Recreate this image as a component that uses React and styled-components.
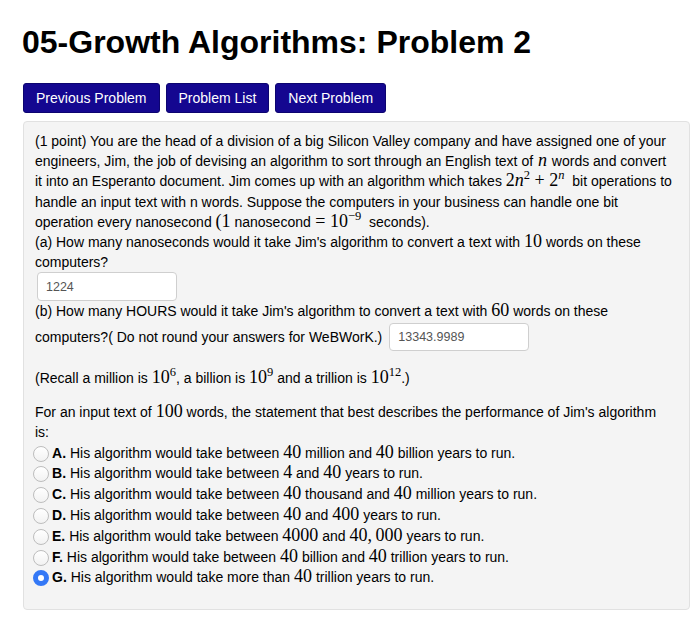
import React from 'react'
import styled, { createGlobalStyle } from 'styled-components'

const GlobalStyle = createGlobalStyle`
  body {
    margin: 0;
    background: #fff;
    font-family: "Liberation Sans", Arial, sans-serif;
    color: #000;
  }
`

const options = [
  { key: 'A', text: <>His algorithm would take between <M>40</M> million and <M>40</M> billion years to run.</> },
  { key: 'B', text: <>His algorithm would take between <M>4</M> and <M>40</M> years to run.</> },
  { key: 'C', text: <>His algorithm would take between <M>40</M> thousand and <M>40</M> million years to run.</> },
  { key: 'D', text: <>His algorithm would take between <M>40</M> and <M>400</M> years to run.</> },
  { key: 'E', text: <>His algorithm would take between <M>4000</M> and <M>40,&thinsp;000</M> years to run.</> },
  { key: 'F', text: <>His algorithm would take between <M>40</M> billion and <M>40</M> trillion years to run.</> },
  { key: 'G', text: <>His algorithm would take more than <M>40</M> trillion years to run.</>, checked: true },
]

function App() {
  return (
    <>
      <GlobalStyle />
      <Page>
        <Title>05-Growth Algorithms: Problem 2</Title>
        <Nav>
          <NavBtn>Previous Problem</NavBtn>
          <NavBtn>Problem List</NavBtn>
          <NavBtn>Next Problem</NavBtn>
        </Nav>
        <Panel>
          <Text>
            (1 point) You are the head of a division of a big Silicon Valley company and have assigned one of your<br />
            engineers, Jim, the job of devising an algorithm to sort through an English text of <M><Var>n</Var></M> words and convert<br />
            it into an Esperanto document. Jim comes up with an algorithm which takes <M>2<i>n</i><sup>2</sup><Op>+</Op>2<sup><i>n</i></sup></M>&nbsp; bit operations to<br />
            handle an input text with n words. Suppose the computers in your business can handle one bit<br />
            operation every nanosecond <M>(1</M> nanosecond<M><Op>=</Op>10<sup>−9</sup></M>&nbsp; seconds).<br />
            (a) How many nanoseconds would it take Jim's algorithm to convert a text with <M>10</M> words on these<br />
            computers?
          </Text>
          <Answer value="1224" readOnly />
          <Text>
            (b) How many HOURS would it take Jim's algorithm to convert a text with <M>60</M> words on these
          </Text>
          <InlineRow>
            computers?( Do not round your answers for WeBWorK.)
            <Answer value="13343.9989" readOnly $inline />
          </InlineRow>
          <Note>
            (Recall a million is <M>10<sup>6</sup></M>, a billion is <M>10<sup>9</sup></M> and a trillion is <M>10<sup>12</sup></M>.)
          </Note>
          <Question>
            For an input text of <M>100</M> words, the statement that best describes the performance of Jim's algorithm<br />
            is:
          </Question>
          <Choices>
            {options.map((o) => (
              <Choice key={o.key}>
                <Radio $checked={o.checked} />
                <span><b>{o.key}.</b> {o.text}</span>
              </Choice>
            ))}
          </Choices>
        </Panel>
      </Page>
    </>
  )
}

function M({ children }) {
  return <MathSpan>{children}</MathSpan>
}

const Page = styled.div`
  padding: 22px 8px 12px 22px;
`

const Title = styled.h1`
  margin: 0 0 20px;
  font-size: 32px;
  line-height: 41px;
  font-weight: bold;
`

const Nav = styled.div`
  display: flex;
  gap: 6px;
  padding-left: 1px;
  margin-bottom: 8px;
`

const NavBtn = styled.button`
  height: 30px;
  padding: 0 12px;
  border: 1px solid #0c0470;
  border-radius: 3px;
  background: #140790;
  color: #fff;
  font-family: "Liberation Sans", Arial, sans-serif;
  font-size: 14px;
  cursor: pointer;
`

const Panel = styled.div`
  margin-left: 1px;
  width: 645px;
  box-sizing: content-box;
  padding: 9px 9px 21px 11px;
  background: #f4f4f4;
  border: 1px solid #e1e1e1;
  border-radius: 4px;
  font-size: 14px;
  line-height: 20.2px;
`

const Text = styled.div`
  white-space: nowrap;
`

const MathSpan = styled.span`
  font-family: "Liberation Serif", "Times New Roman", serif;
  font-size: 18px;
  line-height: 0;

  sup {
    font-size: 12.5px;
    vertical-align: 0.55em;
    line-height: 0;
  }
`

const Var = styled.i`
  margin: 0 1px;
`

const Op = styled.span`
  margin: 0 0.25em;
`

const Answer = styled.input`
  display: block;
  box-sizing: border-box;
  width: 140px;
  height: 29px;
  margin: 0 0 0 2px;
  padding: 0 8px;
  border: 1px solid #cfcfcf;
  border-radius: 4px;
  background: #fff;
  color: #555;
  font-family: "Liberation Sans", Arial, sans-serif;
  font-size: 12.5px;

  ${(p) => p.$inline && `
    display: inline-block;
    margin: 0 0 0 7px;
    height: 28px;
  `}
`

const InlineRow = styled.div`
  display: flex;
  align-items: center;
  height: 30px;
`

const Note = styled.p`
  margin: 16px 0 14px;
`

const Question = styled.p`
  margin: 0;
  white-space: nowrap;
`

const Choices = styled.div`
  display: flex;
  flex-direction: column;
  margin-left: -2px;
`

const Choice = styled.label`
  display: flex;
  align-items: center;
  gap: 3px;
  height: 20.8px;
  font-size: 14px;
`

const Radio = styled.span`
  flex: none;
  width: 16px;
  height: 16px;
  border-radius: 50%;
  box-sizing: border-box;
  margin-top: 2px;
  background: linear-gradient(#fff, #f2f2f2);
  border: 1px solid #bdbdbd;

  ${(p) => p.$checked && `
    border: 5px solid #3478f6;
    background: #fff;
  `}
`

export default App
